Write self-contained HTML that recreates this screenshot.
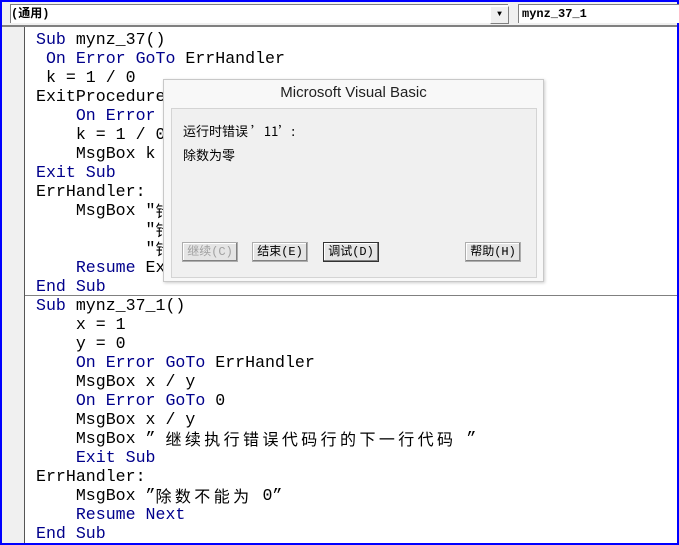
<!DOCTYPE html>
<html><head><meta charset="utf-8"><style>
body{margin:0;width:679px;height:545px;overflow:hidden;background:#f0f0f0;position:relative;font-family:"Liberation Mono","Noto Sans CJK SC",monospace}
.abs{position:absolute}
.code{position:absolute;left:36px;font-size:16.6px;line-height:19px;white-space:pre;color:#000}
.code div{height:19px;line-height:19px;overflow:visible}
.k{color:#00008b}
.c{letter-spacing:3.4px;font-family:"Noto Sans CJK SC",sans-serif;font-size:16px;display:inline-block;height:19px;line-height:19px;vertical-align:top}
.btn{position:absolute;top:242px;width:54px;height:18px;border:1px solid #adadad;background:#e5e5e5;font-family:"Liberation Mono","Noto Sans CJK SC",monospace;font-size:12px;line-height:18px;text-align:center;color:#000;box-shadow:inset -1px -1px #808080,inset 1px 1px #fff}
</style></head><body>
<div class="abs" style="left:0;top:0;width:679px;height:2px;background:#0000ff"></div>
<div class="abs" style="left:0;top:0;width:2px;height:545px;background:#0000ff"></div>
<div class="abs" style="left:677px;top:0;width:2px;height:545px;background:#0000ff"></div>
<div class="abs" style="left:0;top:543px;width:679px;height:2px;background:#0000ff"></div>
<div class="abs" style="left:10px;top:4px;width:497px;height:18px;background:#fff;border-top:1px solid #808080;border-left:1px solid #808080;font-size:12px;font-weight:bold;line-height:18px;font-family:'Liberation Mono','Noto Sans CJK SC',monospace">(通用)</div>
<div class="abs" style="left:490px;top:6px;width:17px;height:16px;background:#f0f0f0;border:1px solid #fff;border-right-color:#808080;border-bottom-color:#808080;font-size:8px;text-align:center;line-height:16px">▼</div>
<div class="abs" style="left:518px;top:4px;width:159px;height:18px;background:#fff;border-top:1px solid #808080;border-left:1px solid #808080;font-size:12px;font-weight:bold;line-height:18px;padding-left:3px">mynz_37_1</div>
<div class="abs" style="left:2px;top:25px;width:675px;height:2px;background:#808080"></div>
<div class="abs" style="left:25px;top:27px;width:652px;height:516px;background:#fff"></div>
<div class="abs" style="left:24px;top:27px;width:1px;height:516px;background:#555"></div>
<div class="abs" style="left:25px;top:295px;width:652px;height:1px;background:#808080"></div>
<div class="code" style="top:30px"><div><span class="k">Sub</span> mynz_37()</div><div> <span class="k">On Error GoTo</span> ErrHandler</div><div> k = 1 / 0</div><div>ExitProcedure:</div><div>    <span class="k">On Error</span> <span class="k">Resume Next</span></div><div>    k = 1 / 0</div><div>    MsgBox k</div><div><span class="k">Exit Sub</span></div><div>ErrHandler:</div><div>    MsgBox "<span class="c">错误号错误号错误号</span>"</div><div>           "<span class="c">错误描述错误描述错误描述错误描</span>" &amp; _</div><div>           "<span class="c">错误来源错误来源</span>"</div><div>    <span class="k">Resume</span> ExitProcedure</div><div><span class="k">End Sub</span></div></div>
<div class="code" style="top:296px"><div><span class="k">Sub</span> mynz_37_1()</div><div>    x = 1</div><div>    y = 0</div><div>    <span class="k">On Error GoTo</span> ErrHandler</div><div>    MsgBox x / y</div><div>    <span class="k">On Error GoTo</span> 0</div><div>    MsgBox x / y</div><div>    MsgBox ” <span class="c">继续执行错误代码行的下一行代码</span> ”</div><div>    <span class="k">Exit Sub</span></div><div>ErrHandler:</div><div>    MsgBox ”<span class="c">除数不能为</span> 0”</div><div>    <span class="k">Resume Next</span></div><div><span class="k">End Sub</span></div></div>
<div class="abs" style="left:163px;top:79px;width:379px;height:201px;background:#f8f8f8;border:1px solid #c8c8c8;box-shadow:1px 1px 3px rgba(0,0,0,.2)"></div>
<div class="abs" style="left:163px;top:84px;width:381px;text-align:center;font-family:'Liberation Sans',sans-serif;font-size:15px;color:#222">Microsoft Visual Basic</div>
<div class="abs" style="left:171px;top:108px;width:364px;height:168px;background:#f0f0f0;border:1px solid #d4d4d4"></div>
<div class="abs" style="left:183px;top:121px;font-family:'Noto Sans CJK SC',sans-serif;font-size:13px;color:#000">运行时错误 ’11’:</div>
<div class="abs" style="left:183px;top:145px;font-family:'Noto Sans CJK SC',sans-serif;font-size:13px;color:#000">除数为零</div>
<div class="btn" style="left:182px;color:#a0a0a0">继续(C)</div>
<div class="btn" style="left:252px">结束(E)</div>
<div class="btn" style="left:323px;border-color:#333">调试(D)</div>
<div class="btn" style="left:465px">帮助(H)</div>
</body></html>
